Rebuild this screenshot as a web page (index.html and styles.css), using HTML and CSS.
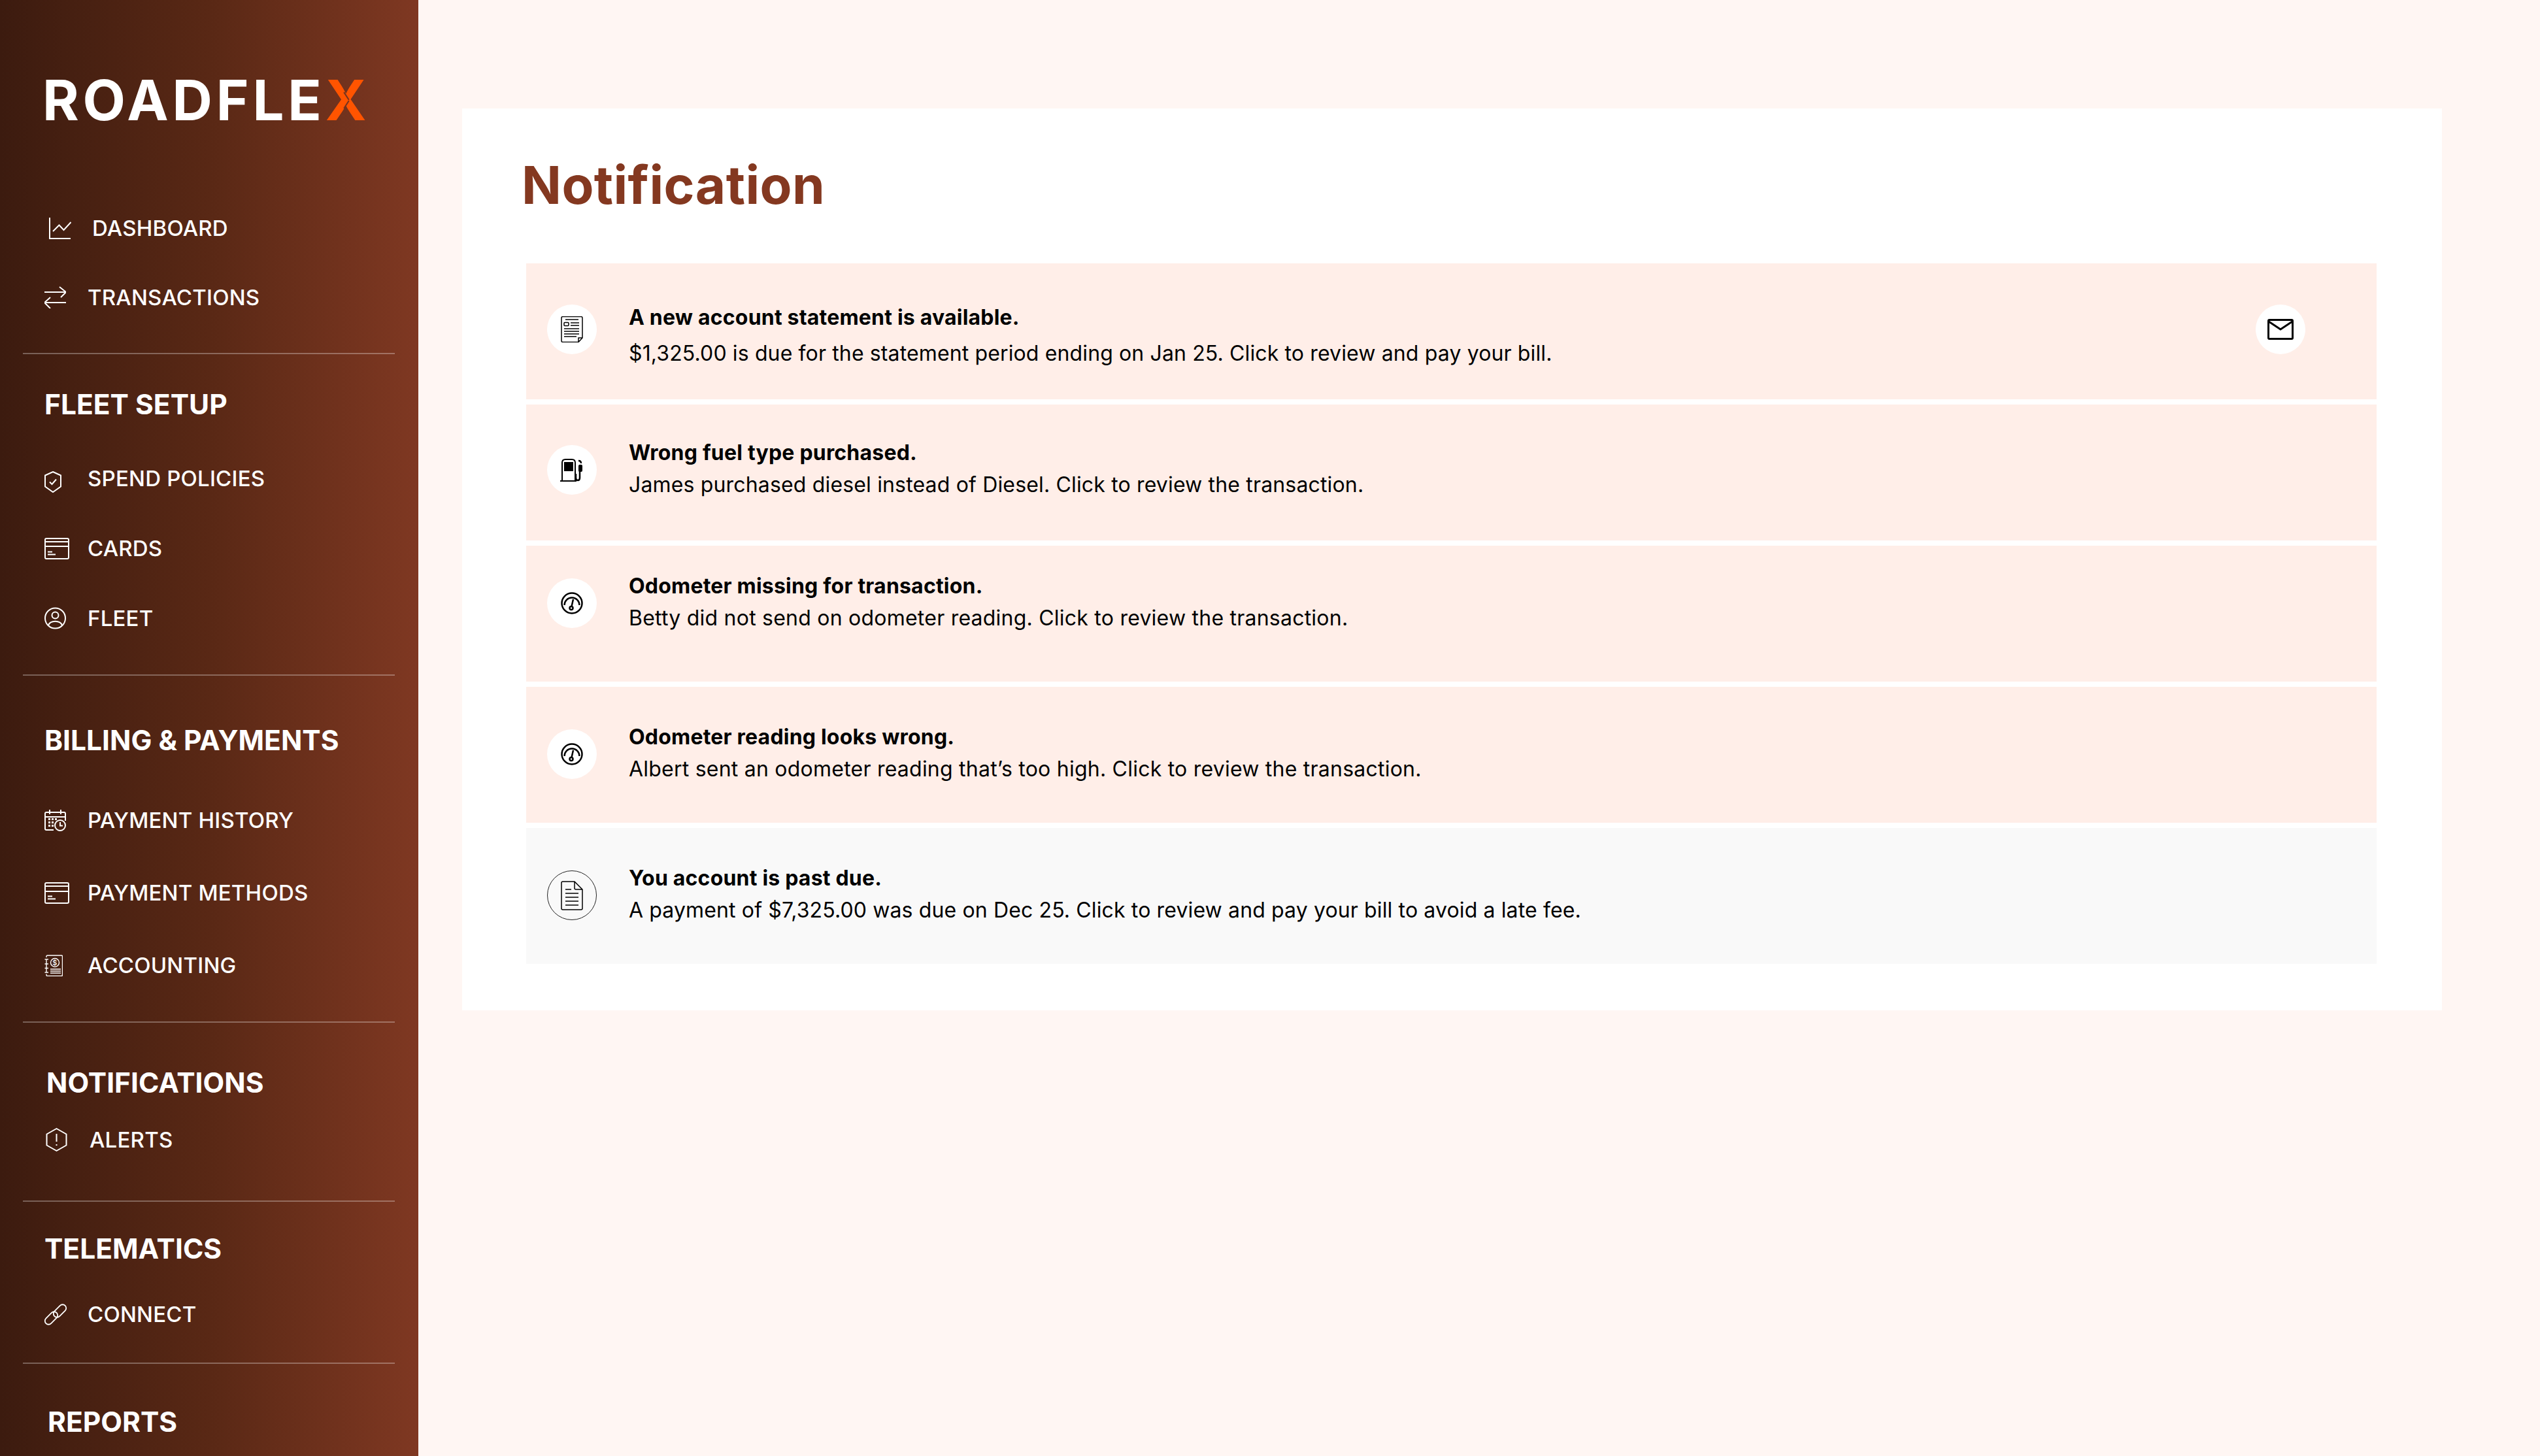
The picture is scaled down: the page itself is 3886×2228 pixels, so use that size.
FILE: index.html
```html
<!DOCTYPE html>
<html lang="en">
<head>
<meta charset="utf-8">
<title>RoadFlex Notification</title>
<link rel="stylesheet" href="styles.css">
</head>
<body>
<aside class="sidebar">
  <div class="logo">ROADFLE<span class="logo-x">X</span></div>

  <section class="group g1">
    <a class="item item-dash">
      <svg class="ic" width="34" height="33" viewBox="0 0 34 33"><path d="M1 0V32H33M6 21 15.500 11.500 22.500 19 33.500 7"/></svg>
      <span>DASHBOARD</span>
    </a>
    <a class="item">
      <svg class="ic" width="33" height="34" viewBox="0 0 33 34"><path d="M0 9H33M23 1 33 9 25 17M33 25H0M9 17 0 25 9 34"/></svg>
      <span>TRANSACTIONS</span>
    </a>
  </section>
  <hr class="divider">

  <section class="group g2">
    <h2 class="heading">FLEET SETUP</h2>
    <a class="item">
      <svg class="ic ic-low" width="26" height="33" viewBox="0 0 26 33"><path d="M13 1 25 6.500V23.500L13 32 1 23.500V6.500Z"/><path d="M8 16.500 11.500 20 18 12.500"/></svg>
      <span>SPEND POLICIES</span>
    </a>
    <a class="item">
      <svg class="ic" width="38" height="33" viewBox="0 0 38 33"><rect x="1" y="1" width="36" height="31" rx="2"/><path d="M1 6H37M1 13H37M5 21.500H12M5 25.500H17"/></svg>
      <span>CARDS</span>
    </a>
    <a class="item">
      <svg class="ic" width="33" height="34" viewBox="0 0 33 34"><circle cx="16.500" cy="17" r="15.500"/><circle cx="16.500" cy="12.500" r="5"/><path d="M6 28.500C7 19.500 26 19.500 27 28.500"/></svg>
      <span>FLEET</span>
    </a>
  </section>
  <hr class="divider">

  <section class="group g3">
    <h2 class="heading">BILLING &amp; PAYMENTS</h2>
    <a class="item">
      <svg class="ic" width="33" height="34" viewBox="0 0 33 34"><path d="M14 32H3Q1 32 1 30V7Q1 5 3 5H30Q32 5 32 7V18M8 1V8M25 1V8M1 12H32"/><path class="dots" d="M6 15.500H9M11 15.500H14M16 15.500H19M6 20.500H9M11 20.500H14M6 25.500H9M11 25.500H14"/><circle cx="24" cy="25" r="8"/><path d="M24 20V25.500H28"/></svg>
      <span>PAYMENT HISTORY</span>
    </a>
    <a class="item">
      <svg class="ic" width="38" height="33" viewBox="0 0 38 33"><rect x="1" y="1" width="36" height="31" rx="2"/><path d="M1 6H37M1 14H37M5 21.500H12M5 25.500H17"/></svg>
      <span>PAYMENT METHODS</span>
    </a>
    <a class="item">
      <svg class="ic ic-thin" width="28" height="33" viewBox="0 0 28 33"><path d="M3 4V2.500Q3 1 4.500 1H26Q27.500 1 27.500 2.500V31Q27.500 32.500 26 32.500H4.500Q3 32.500 3 31V29.500"/><path d="M0.500 7H6M0.500 14H6M0.500 20.500H6M0.500 27H6M3 7V27"/><circle cx="16" cy="12" r="6.500"/><text class="dollar" x="16" y="16">$</text><path d="M9 22H25M9 25H25M9 28H25"/></svg>
      <span>ACCOUNTING</span>
    </a>
  </section>
  <hr class="divider">

  <section class="group g4">
    <h2 class="heading heading-notif">NOTIFICATIONS</h2>
    <a class="item item-alert">
      <svg class="ic" width="33" height="36" viewBox="0 0 33 36"><path d="M16.500 1 31.500 9.500V26.500L16.500 35 1.500 26.500V9.500Z" stroke-linejoin="round"/><path d="M16.500 9V21M16.500 25V27"/></svg>
      <span>ALERTS</span>
    </a>
  </section>
  <hr class="divider">

  <section class="group g5">
    <h2 class="heading">TELEMATICS</h2>
    <a class="item">
      <svg class="ic ic-link" width="34" height="33" viewBox="0 0 34 33"><rect x="-1" y="16.500" width="23" height="11" rx="5.500" transform="rotate(-45 10.500 22)"/><rect x="12" y="5.500" width="23" height="11" rx="5.500" transform="rotate(-45 23.500 11)"/></svg>
      <span>CONNECT</span>
    </a>
  </section>
  <hr class="divider">

  <section class="group g6">
    <h2 class="heading heading-reports">REPORTS</h2>
  </section>
</aside>

<main class="main">
  <div class="card">
    <h1 class="title">Notification</h1>
    <div class="rows">
      <article class="row r1">
        <div class="badge">
          <svg class="doc" width="34" height="40" viewBox="0 0 34 40"><path class="s15" d="M27 39.500H3Q1 39.500 1 37.500V2.500Q1 0.500 3 0.500H31Q33 0.500 33 2.500V33L27 39.500V33H33"/><path class="s15" d="M7 5H27"/><rect class="s15" x="5" y="9.500" width="7" height="5" rx="1"/><path class="s15" d="M15 10H28M15 14H28M5 19H28M5 23H28M5 27H28M5 31H24"/></svg>
        </div>
        <div class="text">
          <h3 class="t">A new account statement is available.</h3>
          <p class="b">$1,325.00 is due for the statement period ending on Jan 25. Click to review and pay your bill.</p>
        </div>
        <div class="badge badge-mail">
          <svg class="doc" width="40" height="32" viewBox="0 0 40 32"><rect class="s3" x="1.500" y="1.500" width="37" height="29" rx="1.500"/><path class="s3" d="M2 4 20 16 38 4"/></svg>
        </div>
      </article>

      <article class="row r2">
        <div class="badge">
          <svg class="doc" width="36" height="35" viewBox="0 0 36 35"><path class="s2" d="M3 33V6Q3 1 8 1H18Q23 1 23 6V33M0 34H25"/><rect class="fill" x="6" y="5" width="14" height="14"/><path class="s25" d="M28 3Q32 3 32 7M24 23V29Q24 33 27 33Q30 33 30 29V18"/><rect class="fill" x="28" y="9" width="6" height="11" rx="2"/></svg>
        </div>
        <div class="text">
          <h3 class="t">Wrong fuel type purchased.</h3>
          <p class="b">James purchased diesel instead of Diesel. Click to review the transaction.</p>
        </div>
      </article>

      <article class="row r3">
        <div class="badge">
          <svg class="doc" width="34" height="34" viewBox="0 0 34 34"><circle class="s25" cx="17" cy="17" r="15.500"/><path class="s25" d="M5.500 20A11.500 11.500 0 0 1 28.500 20M19 11 16.500 22"/><circle class="s25" cx="16" cy="24.500" r="2.500"/></svg>
        </div>
        <div class="text">
          <h3 class="t">Odometer missing for transaction.</h3>
          <p class="b">Betty did not send on odometer reading. Click to review the transaction.</p>
        </div>
      </article>

      <article class="row r4">
        <div class="badge">
          <svg class="doc" width="34" height="34" viewBox="0 0 34 34"><circle class="s25" cx="17" cy="17" r="15.500"/><path class="s25" d="M5.500 20A11.500 11.500 0 0 1 28.500 20M19 11 16.500 22"/><circle class="s25" cx="16" cy="24.500" r="2.500"/></svg>
        </div>
        <div class="text">
          <h3 class="t">Odometer reading looks wrong.</h3>
          <p class="b">Albert sent an odometer reading that’s too high. Click to review the transaction.</p>
        </div>
      </article>

      <article class="row r5">
        <div class="badge badge-line">
          <svg class="doc" width="34" height="45" viewBox="0 0 34 45"><path class="s15" d="M21 1H3Q1 1 1 3V42Q1 44 3 44H31Q33 44 33 42V13ZM21 1V11Q21 13 23 13H33"/><path class="s15" d="M7 13H16M7 19H27M7 25H27M7 31H27M7 37H27"/></svg>
        </div>
        <div class="text">
          <h3 class="t">You account is past due.</h3>
          <p class="b">A payment of $7,325.00 was due on Dec 25. Click to review and pay your bill to avoid a late fee.</p>
        </div>
      </article>
    </div>
  </div>
</main>
</body>
</html>
```

FILE: styles.css
```css
* { box-sizing: border-box; }
html, body { margin: 0; height: 100%; }
body {
  display: flex;
  height: 2228px;
  overflow: hidden;
  background: #fff6f3;
  font-family: Inter, "Noto Sans", sans-serif;
  color: #000;
}

/* Sidebar */
.sidebar {
  width: 640px;
  flex: none;
  height: 2228px;
  overflow: hidden;
  padding-top: 104px;
  color: #fff;
  background: linear-gradient(90deg, #3c1b0f 0%, #592815 50%, #7f3822 100%);
}
.logo {
  height: 100px;
  line-height: 100px;
  padding-left: 65px;
  font-size: 85px;
  font-weight: 700;
  letter-spacing: 5.800px;
  color: #fff;
}
.logo-x {
  position: relative;
  color: #ff5400;
}
.logo-x::before,
.logo-x::after {
  content: "";
  position: absolute;
  left: 25px;
  width: 14px;
  height: 2px;
  background: #733420;
}
.logo-x::before { top: 44px; transform: rotate(57deg); }
.logo-x::after { top: 57px; transform: rotate(-57deg); }

.group { display: flex; flex-direction: column; }
.g1 { padding-top: 115px; padding-bottom: 55px; gap: 46px; }
.g2 { padding-top: 46px; padding-bottom: 56px; gap: 47px; }
.g2 .heading { margin-bottom: 7px; }
.g3 { padding-top: 68px; padding-bottom: 56px; gap: 51px; }
.g3 .heading { margin-bottom: 12px; }
.g4 { padding-top: 61px; padding-bottom: 63px; gap: 28px; }
.g5 { padding-top: 41px; padding-bottom: 44px; gap: 41px; }
.g6 { padding-top: 58px; }

.divider {
  height: 2px;
  margin: 0 36px 0 35px;
  border: 0;
  background: rgba(255, 255, 255, 0.3);
}
.heading {
  margin: 0;
  height: 60px;
  line-height: 62px;
  padding-left: 68px;
  font-size: 42.500px;
  font-weight: 700;
}
.heading-notif { padding-left: 71px; }
.heading-reports { padding-left: 73px; }

.item {
  display: grid;
  grid-template-columns: 66px 1fr;
  align-items: center;
  height: 60px;
  padding-left: 68px;
  font-size: 33px;
  font-weight: 500;
  letter-spacing: 0.200px;
}
.item-dash { padding-left: 75px; }
.item-alert { padding-left: 70px; grid-template-columns: 67px 1fr; }
.ic {
  fill: none;
  stroke: #fff;
  stroke-width: 2;
}
.ic circle[r="8"] { fill: #4a2112; }
.ic .dots { stroke-width: 3; }
.ic-low { margin-top: 10px; }
.ic-thin { stroke-width: 1.400; }
.ic-link { stroke-width: 1.800; overflow: visible; }
.dollar {
  fill: #fff;
  stroke: none;
  font-family: Inter, sans-serif;
  font-size: 11px;
  text-anchor: middle;
}

/* Main */
.main {
  flex: 1;
  padding: 166px 150px 0 67px;
}
.card {
  background: #fff;
  padding: 69px 100px 71px 98px;
}
.title {
  margin: 0 0 72px -7px;
  height: 96px;
  line-height: 96px;
  font-size: 80px;
  font-weight: 700;
  letter-spacing: 0.400px;
  color: #843820;
}
.rows { display: flex; flex-direction: column; gap: 8px; }
.row {
  display: flex;
  align-items: flex-start;
  height: 208px;
  padding-left: 32px;
  padding-right: 109px;
  background: #ffeee8;
}
.r1 { padding-top: 59px; }
.r1 .badge { margin-top: 4px; }
.r1 .b { margin-top: 7px; letter-spacing: 0.130px; }
.r2 { padding-top: 50px; }
.r2 .badge { margin-top: 12px; }
.r3 { padding-top: 38px; }
.r3 .badge { margin-top: 12px; }
.r3 .b { letter-spacing: 0.230px; }
.r4 { padding-top: 53px; }
.r4 .badge { margin-top: 12px; }
.r4 .b { letter-spacing: 0.230px; }
.r5 { padding-top: 53px; background: #f9f9f9; }
.r5 .badge { margin-top: 12px; }
.r5 .b { letter-spacing: 0.130px; }

.badge {
  width: 76px;
  height: 76px;
  flex: none;
  display: flex;
  align-items: center;
  justify-content: center;
  border-radius: 50%;
  background: #fff;
}
.badge-line { background: transparent; border: 1.500px solid #222; }
.badge-mail { margin-left: auto; }
.text { margin-left: 49px; }
.t {
  margin: 0;
  height: 48px;
  line-height: 48px;
  font-size: 32px;
  font-weight: 700;
  letter-spacing: 0.200px;
}
.b {
  margin: 1px 0 0;
  height: 48px;
  line-height: 48px;
  font-size: 32px;
  font-weight: 400;
  letter-spacing: 0.160px;
}
.doc { fill: none; stroke: #000; }
.s15 { stroke-width: 1.500; }
.s2 { stroke-width: 2; }
.s25 { stroke-width: 2.500; }
.s3 { stroke-width: 3; }
.doc .fill { fill: #000; stroke: none; }
```
